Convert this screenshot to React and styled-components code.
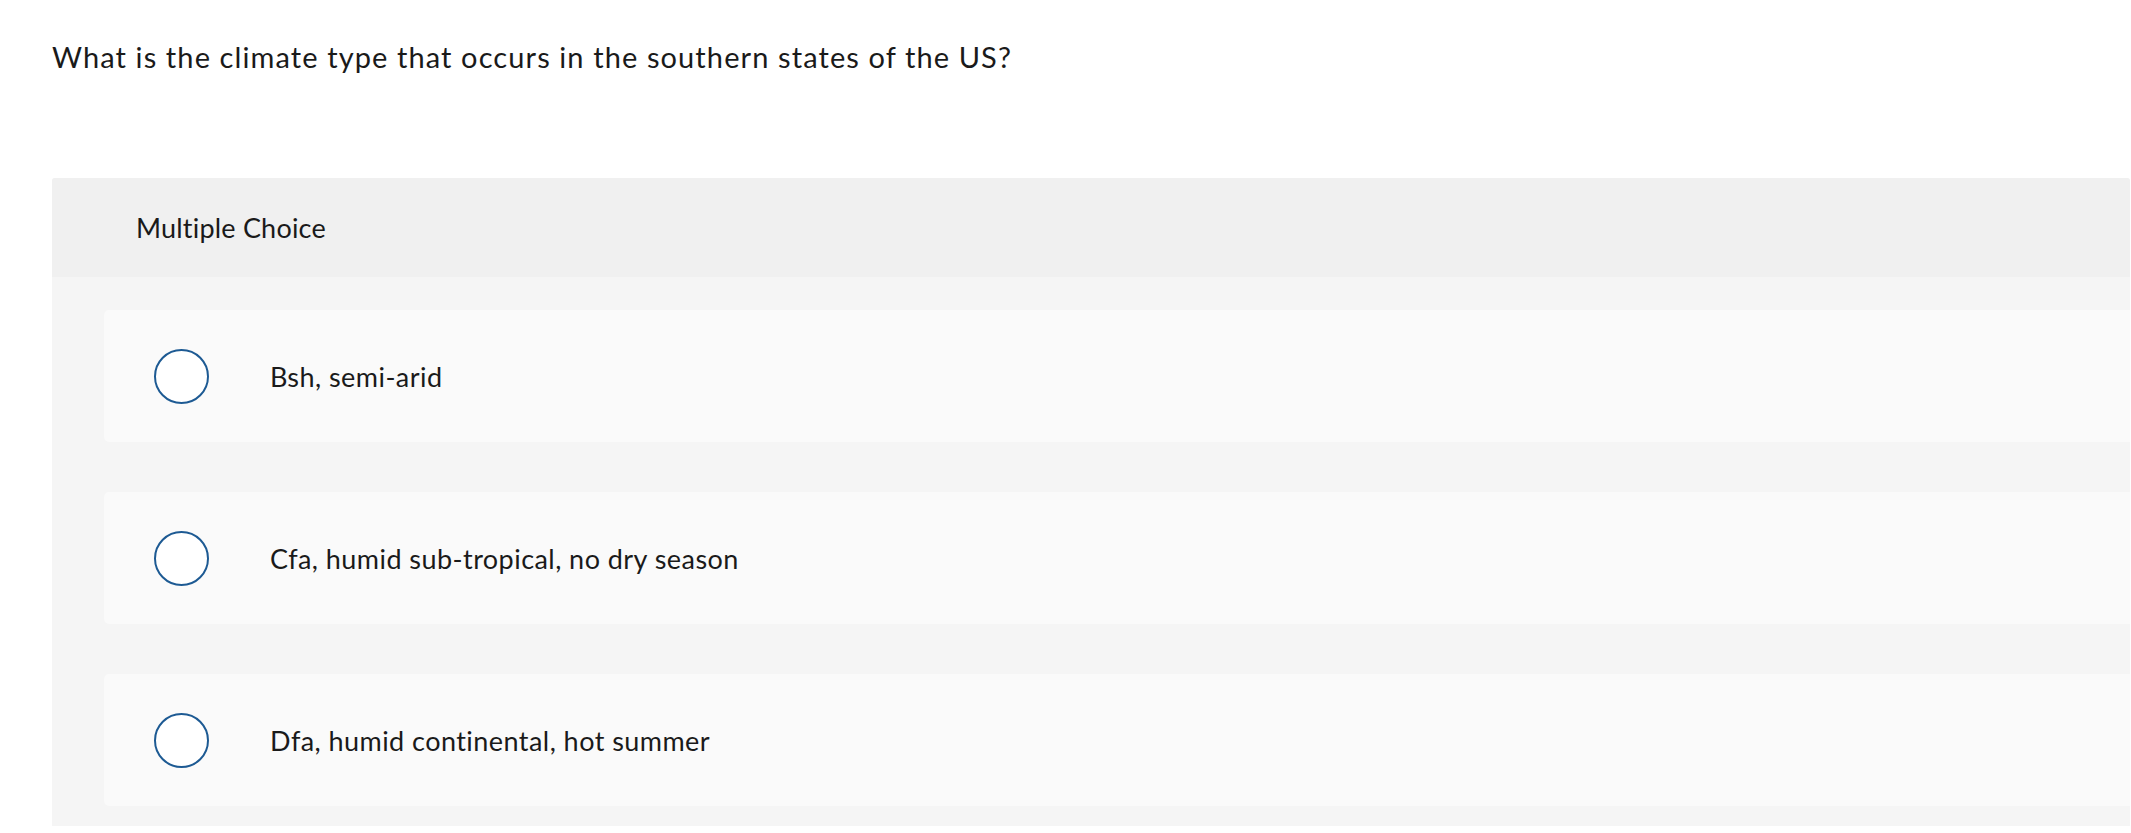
import React from "react";
import styled, { createGlobalStyle } from "styled-components";

const Global = createGlobalStyle`
  html, body { margin: 0; padding: 0; background: #ffffff; }
  body { font-family: "Lato", "Open Sans", sans-serif; color: #1f1f1f; overflow: hidden; }
`;

const Page = styled.div`
  width: 2131px;
  height: 833px;
  overflow: hidden;
`;

const Question = styled.h1`
  margin: 0;
  padding: 39px 0 0 52px;
  height: 178px;
  box-sizing: border-box;
  font-size: 29px;
  font-weight: 400;
  letter-spacing: 1.1px;
  line-height: 36px;
  color: #1a1a1a;
`;

const Panel = styled.section`
  margin-left: 52px;
  margin-right: 1px;
  border-radius: 3px 3px 0 0;
  overflow: hidden;
  background: #f5f5f5;
`;

const PanelHeader = styled.div`
  height: 99px;
  background: #f0f0f0;
  display: flex;
  align-items: center;
  padding-left: 84px;
  font-size: 27px;
  letter-spacing: 0.2px;
  color: #1a1a1a;
`;

const OptionList = styled.div`
  display: flex;
  flex-direction: column;
  gap: 50px;
  padding: 33px 0 20px 52px;
`;

const OptionCard = styled.label`
  height: 132px;
  display: flex;
  align-items: center;
  background: #fafafa;
  border-radius: 5px 0 0 5px;
  padding-left: 50px;
  cursor: pointer;
`;

const Radio = styled.span`
  width: 55px;
  height: 55px;
  box-sizing: border-box;
  border: 2px solid #1d5a93;
  border-radius: 50%;
  background: #ffffff;
  flex: none;
`;

const OptionText = styled.span`
  margin-left: 61px;
  font-size: 27px;
  letter-spacing: 0.45px;
  color: #1a1a1a;
`;

const options = [
  "Bsh, semi-arid",
  "Cfa, humid sub-tropical, no dry season",
  "Dfa, humid continental, hot summer",
];

export default function App() {
  return (
    <Page>
      <Global />
      <Question>What is the climate type that occurs in the southern states of the US?</Question>
      <Panel>
        <PanelHeader>Multiple Choice</PanelHeader>
        <OptionList>
          {options.map((o) => (
            <OptionCard key={o}>
              <Radio />
              <OptionText>{o}</OptionText>
            </OptionCard>
          ))}
        </OptionList>
      </Panel>
    </Page>
  );
}
